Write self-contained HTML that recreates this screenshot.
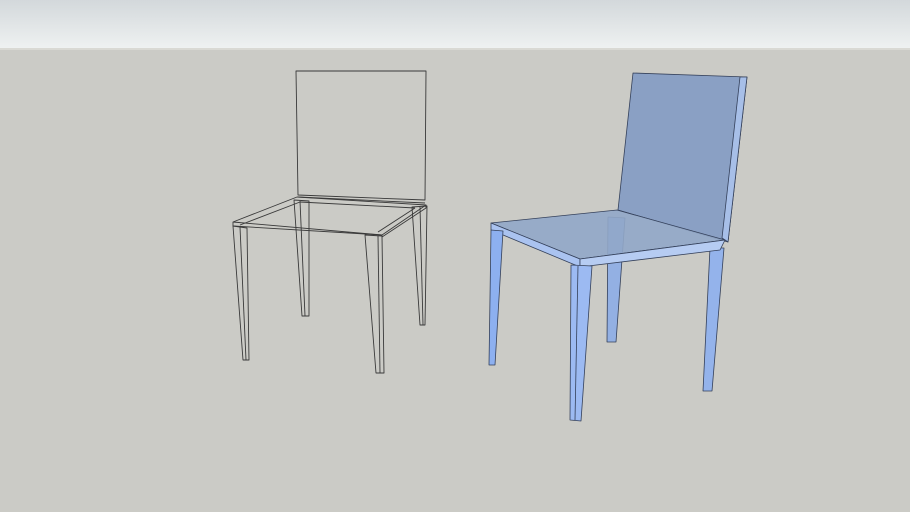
<!DOCTYPE html>
<html><head><meta charset="utf-8"><style>
html,body{margin:0;padding:0;width:910px;height:512px;overflow:hidden;background:#cbcbc6}
.sky{position:absolute;left:0;top:0;width:910px;height:48px;background:linear-gradient(#d3d8db,#eef1f1)}
.hz{position:absolute;left:0;top:48px;width:910px;height:2px;background:#d9d9d4}
svg{position:absolute;left:0;top:0}
</style></head><body>
<div class="sky"></div><div class="hz"></div>
<svg width="910" height="512" viewBox="0 0 910 512">
<g fill="none" stroke="#3a3a3a" stroke-width="0.9" stroke-linejoin="round">
 <polygon points="296,71 426,71 425,200 298,195"/>
 <line x1="298" y1="197" x2="425" y2="203"/>
 <polygon points="233,222 297,197 426,205 382,235"/>
 <polyline points="233,222 233,226 382,235 382,237 426,208 426,205"/>
 <line x1="240" y1="225" x2="300" y2="202"/>
 <line x1="300" y1="202" x2="415" y2="208"/>
 <line x1="415" y1="208" x2="378" y2="232"/>
 <polygon points="233,226 247,228 249,360 243,360"/>
 <line x1="240" y1="227" x2="246" y2="360"/>
 <polygon points="365,235 382,236 384,373 376,373"/>
 <line x1="378" y1="236" x2="380" y2="373"/>
 <polygon points="294,200 309,201 309,316 302,316"/>
 <line x1="300" y1="201" x2="305" y2="316"/>
 <polygon points="412,207 427,206 425,325 420,325"/>
 <line x1="420" y1="207" x2="423" y2="325"/>
</g>
<g stroke="#34405a" stroke-width="0.8" stroke-linejoin="round">
 <polygon points="608,217 625,218 616,342 607,342" fill="#8aabe8" fill-opacity="0.85"/>
 <polygon points="710,248 724,248 712,391 703,391" fill="#8eb0ee" fill-opacity="0.9"/>
 <polygon points="633,73 747,77 728,242 618,210" fill="#8aa0c4"/>
 <polygon points="740,77 747,77 728,242 722,238" fill="#a7bfe8"/>
 <polygon points="491,223 617,210 725,240 580,259" fill="#91a7c8" fill-opacity="0.9"/>
 <polygon points="491,223 580,259 580,267 491,230" fill="#aac3f0"/>
 <polygon points="580,259 725,240 720,250 580,267" fill="#b6ccf2"/>
 <polygon points="491,230 503,231 495,365 489,365" fill="#8db0f0"/>
 <polygon points="571,265 592,266 581,421 570,420" fill="#9cbaf2"/>
 <line x1="578" y1="266" x2="575" y2="420"/>
</g>
</svg>
</body></html>
